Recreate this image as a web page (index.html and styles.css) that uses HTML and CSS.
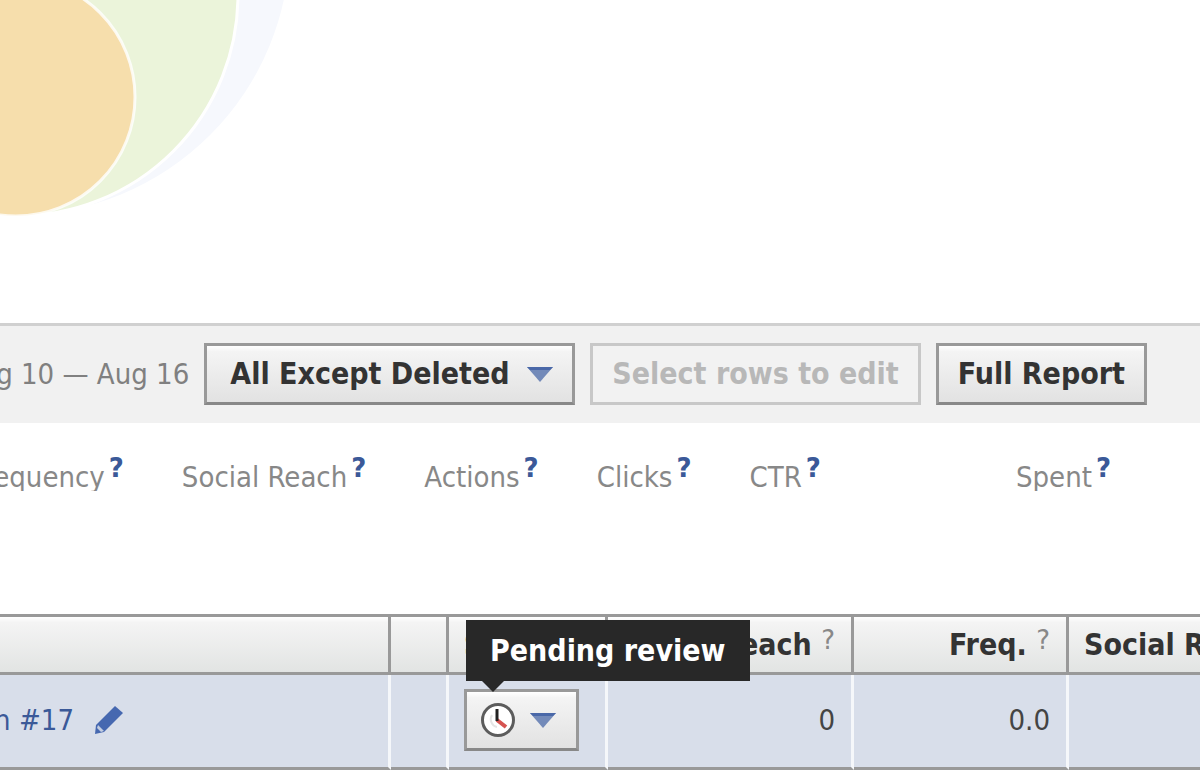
FILE: index.html
```html
<!DOCTYPE html>
<html lang="en">
<head>
    <meta charset="UTF-8">
    <meta name="viewport" content="width=device-width, initial-scale=1.0">
    <title>Campaign report</title>
    <link rel="stylesheet" href="styles.css">
</head>
<body>
    <div class="audience">
        <svg class="circles" width="300" height="230" viewBox="0 0 300 230" aria-hidden="true">
            <circle cx="17" cy="-58" r="273" fill="#f6f8fd"/>
            <circle cx="17" cy="-5" r="221" fill="#ebf4da" stroke="#fff" stroke-width="3"/>
            <circle cx="16" cy="97" r="119" fill="#f6deac" stroke="#fff" stroke-opacity="0.8" stroke-width="3"/>
        </svg>
    </div>

    <div class="toolbar">
        <span class="dates">Aug 10 — Aug 16</span>
        <label class="filter">
            <select class="button" aria-label="Filter">
                <option>All Except Deleted</option>
            </select>
            <svg class="arrow" width="26" height="15" viewBox="0 0 26 15" aria-hidden="true">
                <path d="M0 0H26L13 15Z" fill="#738ab9"/>
                <path d="M0 0H26L23 3H3Z" fill="#4a68a8"/>
            </svg>
        </label>
        <button type="button" class="button" disabled>Select rows to edit</button>
        <button type="button" class="button">Full Report</button>
    </div>

    <ul class="metrics">
        <li><span class="label">Frequency</span><a class="help" href="#">?</a></li>
        <li><span class="label">Social Reach</span><a class="help" href="#">?</a></li>
        <li><span class="label">Actions</span><a class="help" href="#">?</a></li>
        <li><span class="label">Clicks</span><a class="help" href="#">?</a></li>
        <li><span class="label">CTR</span><a class="help" href="#">?</a></li>
        <li class="spent"><span class="label">Spent</span><a class="help" href="#">?</a></li>
    </ul>

    <table class="campaigns">
        <colgroup>
            <col class="colName">
            <col class="colCheck">
            <col class="colStatus">
            <col class="colReach">
            <col class="colFreq">
            <col>
        </colgroup>
        <thead>
            <tr>
                <th></th>
                <th></th>
                <th class="left">Status</th>
                <th>Reach <a class="hint" href="#">?</a></th>
                <th>Freq. <a class="hint" href="#">?</a></th>
                <th class="left">Social Reach</th>
            </tr>
        </thead>
        <tbody>
            <tr>
                <td>
                    <div class="name">
                        <a href="#">Campaign #17</a>
                        <svg class="pencil" width="30" height="30" viewBox="0 0 30 30" aria-hidden="true">
                            <path d="M21 1L29 8L10 27L1 29L2 20Z" fill="#4668b0"/>
                            <path d="M4 20L10 26L7 27L3 23Z" fill="#c3cde1"/>
                        </svg>
                    </div>
                </td>
                <td></td>
                <td class="left">
                    <div class="status">
                        <button type="button" class="button statusButton" aria-label="Pending review">
                            <svg width="34" height="34" viewBox="0 0 34 34" aria-hidden="true">
                                <circle cx="17" cy="17" r="15.500" fill="#fff" stroke="#5c5c5c" stroke-width="3"/>
                                <path d="M11 12A8 8 0 0 0 16 24" fill="none" stroke="#e4e4e4" stroke-width="2"/>
                                <path d="M16 17L25 24" stroke="#d65350" stroke-width="4"/>
                                <path d="M16 6V18" stroke="#222" stroke-width="3"/>
                            </svg>
                            <svg width="26" height="15" viewBox="0 0 26 15" aria-hidden="true">
                                <path d="M0 0H26L13 15Z" fill="#738ab9"/>
                                <path d="M0 0H26L23 3H3Z" fill="#4a68a8"/>
                            </svg>
                        </button>
                        <div class="tooltip" role="tooltip">Pending review</div>
                    </div>
                </td>
                <td>0</td>
                <td>0.0</td>
                <td></td>
            </tr>
        </tbody>
    </table>
</body>
</html>
```
FILE: styles.css
```css
body {
    margin: 0;
    overflow: hidden;
    background: #fff;
    color: #444;
    font-family: "DejaVu Sans Condensed", Tahoma, "Noto Sans", sans-serif;
    font-size: 29px;
    line-height: 36px;
}
a {
    text-decoration: none;
}
.audience {
    height: 323px;
}
.circles {
    display: block;
}
.toolbar {
    display: flex;
    justify-content: flex-end;
    gap: 15px;
    padding: 17px 53px 18px 0;
    border-top: 3px solid #d0d0d0;
    background: #f1f1f1;
    white-space: nowrap;
}
.dates {
    color: #808080;
    line-height: 62px;
}
.button {
    box-sizing: border-box;
    height: 62px;
    margin: 0;
    padding: 0 19px;
    border: 3px solid #999;
    border-bottom-color: #888;
    border-radius: 0;
    background: linear-gradient(#fff, #f4f4f4 10%, #e2e2e2);
    color: #333;
    font-family: inherit;
    font-size: 30px;
    font-weight: bold;
    line-height: 36px;
    cursor: pointer;
}
.button:disabled {
    border-color: #c8c8c8;
    background: #f2f2f2;
    color: #b8b8b8;
    cursor: default;
}
.filter {
    position: relative;
}
.filter .button {
    appearance: none;
    padding: 0 62px 0 23px;
}
.arrow {
    position: absolute;
    top: 24px;
    right: 22px;
    pointer-events: none;
}
.metrics {
    display: flex;
    justify-content: flex-end;
    gap: 58px;
    box-sizing: border-box;
    height: 191px;
    margin: 0;
    padding: 32px 89px 0 0;
    list-style: none;
    color: #888;
    white-space: nowrap;
}
.metrics li {
    display: flex;
    align-items: flex-start;
}
.label {
    height: 36px;
    line-height: 44px;
    overflow: hidden;
}
.help {
    margin-left: 4px;
    color: #3b5998;
    font-family: "DejaVu Sans", Verdana, sans-serif;
    font-size: 26px;
    font-weight: bold;
    line-height: 26px;
}
.spent {
    margin-left: 137px;
}
.campaigns {
    width: 100%;
    table-layout: fixed;
    border-collapse: separate;
    border-spacing: 0;
    border-top: 3px solid #999;
}
.colName {
    width: 391px;
}
.colCheck {
    width: 58px;
}
.colStatus {
    width: 159px;
}
.colReach {
    width: 246px;
}
.colFreq {
    width: 215px;
}
th, td {
    padding: 0 16px 0 0;
    border-right: 3px solid #f5f7fa;
    border-bottom: 3px solid #999;
    text-align: right;
    white-space: nowrap;
}
th {
    height: 55px;
    border-right-color: #999;
    background: linear-gradient(#fff, #f4f4f4 10%, #e2e4e3);
    color: #333;
    font-size: 30px;
}
td {
    height: 90px;
    padding-bottom: 2px;
    background: #d8deea;
}
th:last-child, td:last-child {
    border-right: 0;
    overflow: hidden;
}
.left {
    padding-right: 0;
    padding-left: 15px;
    text-align: left;
}
.hint {
    color: #888;
    font-family: "DejaVu Sans", Verdana, sans-serif;
    font-size: 26px;
    font-weight: normal;
    line-height: 20px;
    vertical-align: 6px;
}
.name {
    display: flex;
    justify-content: flex-end;
    align-items: center;
    gap: 20px;
    padding-right: 248px;
}
.name a {
    color: #3b5998;
}
.pencil {
    flex: none;
}
.status {
    position: relative;
    width: 115px;
}
.statusButton {
    display: flex;
    align-items: center;
    gap: 15px;
    width: 100%;
    padding: 0 14px;
}
/* sits above the status button, over the table header */
.tooltip {
    position: absolute;
    bottom: 70px;
    left: 2px;
    padding: 13px 24px 12px;
    background: #282828;
    color: #fff;
    font-size: 30px;
    font-weight: bold;
}
.tooltip::after {
    content: "";
    position: absolute;
    top: 100%;
    left: 16px;
    border: 11px solid transparent;
    border-top-color: #282828;
    border-bottom: 0;
}
```
